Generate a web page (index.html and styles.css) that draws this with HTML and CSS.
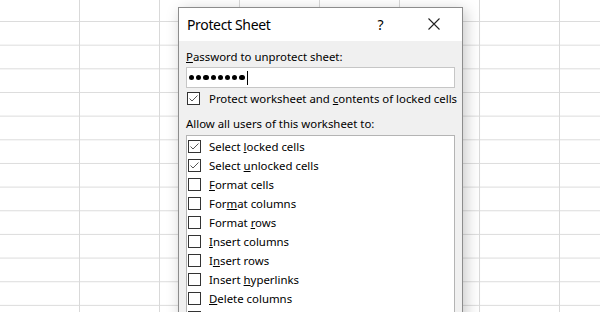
FILE: index.html
```html
<!DOCTYPE html>
<html lang="en">
<head>
  <meta charset="UTF-8" />
  <title>Protect Sheet</title>
  <link rel="stylesheet" href="styles.css">
</head>
<body>

  <div class="sheet"></div>

  <div class="dialog">
    <div class="titlebar">
      <span class="title">Protect Sheet</span>
      <span class="help">?</span>
      <span class="close">
        <svg width="12" height="12" viewBox="0 0 12 12"><path d="M0.5 0.5 L11.5 11.5 M11.5 0.5 L0.5 11.5" stroke="#222" stroke-width="1.1" fill="none"/></svg>
      </span>
    </div>

    <div class="content">
      <label class="field-label" for="pw"><u>P</u>assword to unprotect sheet:</label>
      <div class="password" id="pw" aria-label="password">
        <span class="dot"></span><span class="dot"></span><span class="dot"></span><span class="dot"></span>
        <span class="dot"></span><span class="dot"></span><span class="dot"></span><span class="dot"></span>
        <span class="caret"></span>
      </div>

      <div class="check-row">
        <span class="box checked"></span>
        <span>Protect worksheet and <u>c</u>ontents of locked cells</span>
      </div>

      <div class="field-label allow">Allow all users of this worksheet to:</div>

      <div class="list">
        <div class="item"><span class="box checked"></span><span>Select <u>l</u>ocked cells</span></div>
        <div class="item"><span class="box checked"></span><span>Select <u>u</u>nlocked cells</span></div>
        <div class="item"><span class="box"></span><span><u>F</u>ormat cells</span></div>
        <div class="item"><span class="box"></span><span>For<u>m</u>at columns</span></div>
        <div class="item"><span class="box"></span><span>Format <u>r</u>ows</span></div>
        <div class="item"><span class="box"></span><span><u>I</u>nsert columns</span></div>
        <div class="item"><span class="box"></span><span>I<u>n</u>sert rows</span></div>
        <div class="item"><span class="box"></span><span>Insert <u>h</u>yperlinks</span></div>
        <div class="item"><span class="box"></span><span><u>D</u>elete columns</span></div>
        <div class="item"><span class="box"></span><span>D<u>e</u>lete rows</span></div>
      </div>
    </div>
  </div>

</body>
</html>
```

FILE: styles.css
```css
* {
  box-sizing: border-box;
}

html, body {
  margin: 0;
  height: 100%;
  overflow: hidden;
}

body {
  font-family: 'Noto Sans', sans-serif;
  font-size: 11.4px;
  color: #000;
  background-color: #fff;
}

/* spreadsheet grid behind the dialog */
.sheet {
  height: 100%;
  background-image:
    linear-gradient(to right, transparent 79px, #d9d9d9 79px, #d9d9d9 80px),
    linear-gradient(to bottom, transparent 22.67px, #dcdcdc 22.67px);
  background-size: 80px 100%, 100% 23.67px;
  background-position: 0 0, 0 -1.67px;
}

.dialog {
  position: absolute;
  left: 178px;
  top: 7px;
  width: 285px;
  height: 330px;
  border: 1px solid #8c8c8c;
  background-color: #f0f0f0;
  box-shadow: 3px 3px 14px rgba(0, 0, 0, 0.22);
}

.titlebar {
  display: flex;
  align-items: center;
  height: 33px;
  background-color: #fff;
  padding-left: 8px;
  padding-bottom: 1px;
}

.title {
  flex: 1;
  font-size: 14px;
  letter-spacing: -0.35px;
}

.help {
  width: 51px;
  font-size: 14px;
  text-align: center;
}

.close {
  display: flex;
  justify-content: center;
  align-items: center;
  width: 56px;
  height: 100%;
}

.content {
  padding: 8px 6px 0 7px;
  white-space: nowrap;
}

.field-label {
  display: block;
  line-height: 16px;
}

.allow {
  margin-top: 11px;
}

.password {
  display: flex;
  align-items: center;
  gap: 2px;
  height: 21px;
  margin-top: 2px;
  margin-right: 1px;
  padding-left: 2px;
  background-color: #fff;
  border: 1px solid #c6c6c6;
}

.dot {
  width: 5.2px;
  height: 5.2px;
  border-radius: 50%;
  background-color: #000;
}

.caret {
  width: 1px;
  height: 14px;
  margin-left: 0;
  background-color: #000;
}

.check-row {
  display: flex;
  align-items: center;
  gap: 9px;
  height: 14px;
  margin-top: 3px;
  padding-left: 1px;
}

.box {
  flex: none;
  width: 13px;
  height: 13px;
  border: 1px solid #333;
  background-color: #fff;
}

.box.checked {
  background-image: url("data:image/svg+xml,%3Csvg xmlns='http://www.w3.org/2000/svg' width='11' height='11' viewBox='0 0 11 11'%3E%3Cpath d='M1.5 5.5 L4 8 L9.5 2.5' stroke='%23555' stroke-width='1' fill='none'/%3E%3C/svg%3E");
  background-repeat: no-repeat;
}

.list {
  margin-top: 3px;
  margin-right: 1px;
  padding-top: 1px;
  height: 200px;
  background-color: #fff;
  border: 1px solid #b4b4b4;
}

.item {
  display: flex;
  align-items: center;
  gap: 8px;
  height: 19px;
  padding-left: 1px;
}
```
